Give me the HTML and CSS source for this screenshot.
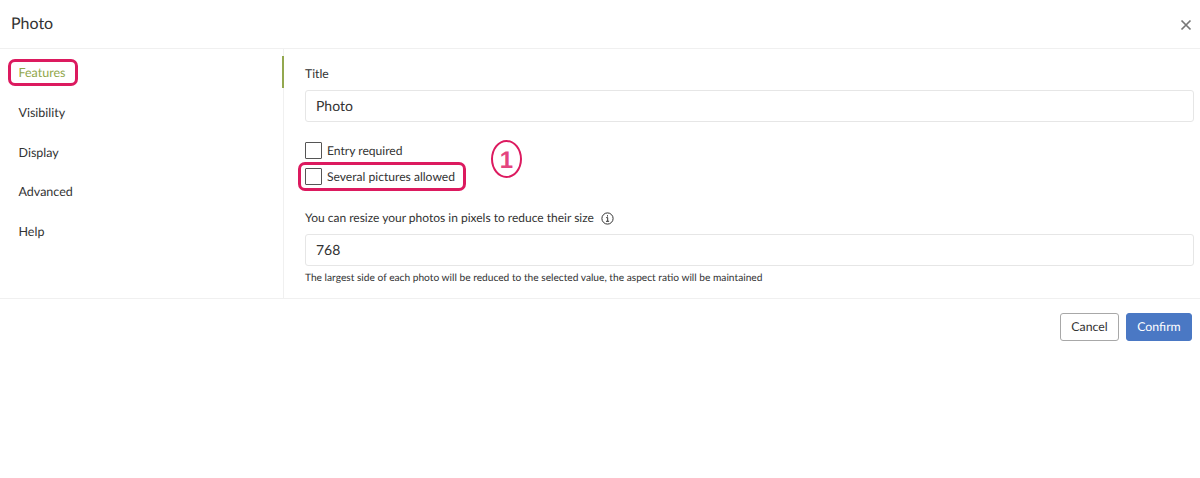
FILE: index.html
```html
<!DOCTYPE html>
<html lang="en">
<head>
<meta charset="utf-8">
<title>Photo</title>
<link rel="stylesheet" href="styles.css">
</head>
<body>
<div class="dialog">
  <header class="head">
    <h1 class="title">Photo</h1>
    <svg class="close" width="12" height="12" viewBox="0 0 12 12"><path d="M1.5 1.5l9 9M10.5 1.5l-9 9" stroke="#777" stroke-width="1.7" fill="none"/></svg>
  </header>
  <div class="body">
    <nav class="side">
      <a class="tab active">Features</a>
      <a class="tab">Visibility</a>
      <a class="tab">Display</a>
      <a class="tab">Advanced</a>
      <a class="tab">Help</a>
    </nav>
    <main class="content">
      <label class="label">Title</label>
      <div class="input">Photo</div>
      <div class="checks">
        <div class="check"><span class="box"></span><span>Entry required</span></div>
        <div class="check"><span class="box"></span><span>Several pictures allowed</span></div>
      </div>
      <div class="label label-info">You can resize your photos in pixels to reduce their size
        <svg class="info" width="13" height="13" viewBox="0 0 13 13"><circle cx="6.5" cy="6.5" r="5.6" fill="none" stroke="#333" stroke-width="1"/><path d="M5.2 5.6h1.5v3.6M5 9.3h3.1M6.5 3.2v1.3" fill="none" stroke="#333" stroke-width="1"/></svg>
      </div>
      <div class="input">768</div>
      <p class="hint">The largest side of each photo will be reduced to the selected value, the aspect ratio will be maintained</p>
    </main>
  </div>
  <footer class="foot">
    <button class="btn cancel">Cancel</button>
    <button class="btn confirm">Confirm</button>
  </footer>
  <span class="mark mark-tab"></span>
  <span class="mark mark-check"></span>
  <span class="badge">1</span>
</div>
</body>
</html>
```
FILE: styles.css
```css
* { box-sizing: border-box; }
html, body { margin: 0; padding: 0; background: #fff; }
body { font-family: Lato, "Liberation Sans", sans-serif; color: #333; font-size: 12px; text-rendering: geometricPrecision; }
.dialog { position: relative; width: 1200px; height: 478px; overflow: hidden; }
.head { height: 49px; display: flex; align-items: center; justify-content: space-between; padding: 0 8px 0 11px; border-bottom: 1px solid #f0f0f0; }
.title { margin: 0; font-size: 16px; font-weight: 400; line-height: 20px; color: #333; }
.close { margin-top: 1px; }
.body { display: flex; height: 250px; border-bottom: 1px solid #f0f0f0; }
.side { width: 284px; padding-top: 4px; border-right: 1px solid #f0f0f0; display: flex; flex-direction: column; }
.tab { height: 39.7px; padding-left: 18.5px; display: flex; align-items: center; color: #333; font-size: 12.5px; }
.tab.active { color: #8fa64a; }
.content { position: relative; flex: 1; padding: 17px 6px 0 21px; }
.content::before { content: ""; position: absolute; left: -2px; top: 7px; width: 2px; height: 32px; background: #93a84f; }
.label { display: block; line-height: 16px; font-size: 12.2px; color: #333; }
.input { height: 32px; margin-top: 8px; border: 1px solid #e6e6e6; border-radius: 3px; padding: 0 10px 1px; display: flex; align-items: center; font-size: 14px; color: #333; }
.checks { margin-top: 19px; display: flex; flex-direction: column; gap: 8px; }
.check { display: flex; align-items: center; gap: 5px; height: 18px; font-size: 12.1px; }
.box { width: 17px; height: 17px; border: 1.5px solid #555; border-radius: 1px; }
.label-info { margin-top: 25px; display: flex; align-items: center; gap: 7px; white-space: nowrap; font-size: 12px; }
.info { flex: none; }
.hint { margin: 5px 0 0; font-size: 10.2px; line-height: 14px; color: #333; }
.foot { display: flex; justify-content: flex-end; gap: 7px; padding: 14px 8px 0 0; }
.btn { height: 28px; border-radius: 3px; font-family: inherit; font-size: 12.3px; padding: 0 0 2px; text-rendering: geometricPrecision; }
.cancel { width: 59px; background: #fff; border: 1px solid #a8a8a8; color: #333; }
.confirm { width: 66px; background: #4a78c4; border: 1px solid #4a78c4; color: #fff; }
.mark { position: absolute; border: 3px solid #dc1a5f; border-radius: 7px; }
.mark-tab { left: 8px; top: 59px; width: 70px; height: 27px; }
.mark-check { left: 298px; top: 162px; width: 168px; height: 29px; }
.badge { position: absolute; left: 491px; top: 140px; width: 31px; height: 38px; border: 2px solid #dc1a5f; border-radius: 50%; color: #e4457f; font-family: "Liberation Sans", sans-serif; font-size: 24px; font-weight: 700; line-height: 37px; text-align: center; }
```
